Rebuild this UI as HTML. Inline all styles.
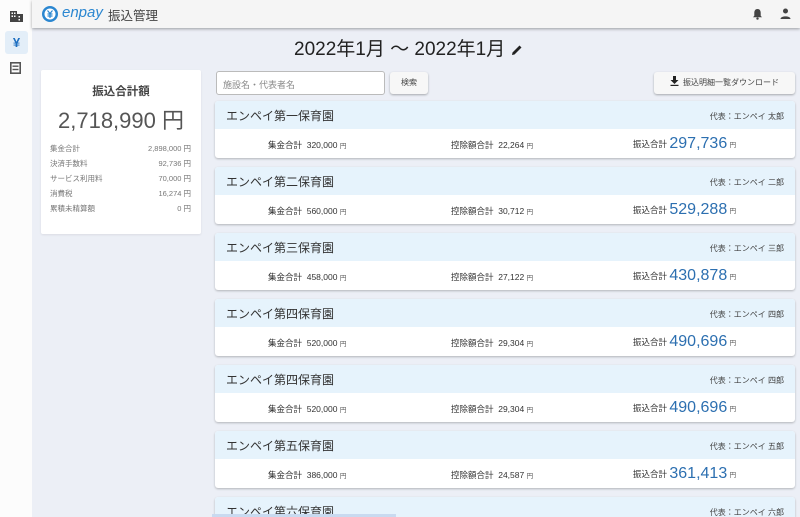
<!DOCTYPE html>
<html style="width:800px;height:517px;overflow:hidden"><head><meta charset="utf-8"><style>
*{box-sizing:border-box;margin:0;padding:0}
html,body{width:800px;height:517px;overflow:hidden}
body{font-family:"Liberation Sans","Noto Sans CJK JP",sans-serif;background:#eceff6;position:relative;color:#333}
b{font-weight:normal}
.side{position:absolute;left:0;top:0;width:32px;height:517px;background:#fcfcfc}
.hdr{position:absolute;left:32px;top:0;width:768px;height:28px;background:#f5f5f5;box-shadow:0 1px 3px rgba(0,0,0,.35)}
.title{position:absolute;left:294px;top:34px;font-size:19px;color:#222;white-space:nowrap}
.lp{position:absolute;left:41px;top:70px;width:160px;height:164px;background:#fff;border-radius:2px;box-shadow:0 1px 2px rgba(0,0,0,.08)}
.lp h3{font-size:11.5px;text-align:center;margin-top:13px;font-weight:bold;color:#444}
.lp .big{font-size:22px;text-align:center;color:#555;margin-top:4px}
.row{display:flex;justify-content:space-between;font-size:7.5px;color:#777;padding:0 10px 0 9px;height:15px;line-height:15px}
.search{position:absolute;left:216px;top:71px;width:169px;height:24px;border:1px solid #bbb;border-radius:3px;background:#fff;font-size:9px;color:#888;padding:6px 6px}
.btn{position:absolute;background:#f7f7f7;border-radius:3px;box-shadow:0 1px 2px rgba(0,0,0,.3);font-size:8px;color:#444;text-align:center}
.card{position:absolute;left:215px;width:580px;height:57px;border-radius:3px;background:#fff;box-shadow:0 1px 2px rgba(0,0,0,.25);overflow:hidden}
.ch{height:28px;background:#e6f3fc;position:relative}
.ch .n{position:absolute;left:11px;top:6px;font-size:12px;color:#333}
.ch .r{position:absolute;right:11px;top:10px;font-size:8px;color:#444}
.cb{position:relative;height:29px;font-size:8.5px;color:#333}
.cb span{position:absolute;top:10px;white-space:nowrap}
.y{font-size:6.5px;color:#555}
.blue{font-size:16px;color:#2c6fb0;position:relative;top:1px}
</style></head><body>
<div class="side">
<svg style="position:absolute;left:10px;top:11px" width="13" height="11" viewBox="0 0 13 11"><rect x="0" y="0" width="7" height="11" fill="#444"/><rect x="7" y="3" width="6" height="8" fill="#444"/><g fill="#fff"><rect x="1.5" y="1.5" width="1.5" height="1.5"/><rect x="4" y="1.5" width="1.5" height="1.5"/><rect x="1.5" y="4.5" width="1.5" height="1.5"/><rect x="4" y="4.5" width="1.5" height="1.5"/><rect x="8.5" y="5" width="1.5" height="1.5"/><rect x="8.5" y="8" width="1.5" height="1.5"/></g></svg>
<div style="position:absolute;left:5px;top:31px;width:23px;height:23px;background:#e3eef8;border-radius:3px;color:#1e6fc0;font-size:13px;font-weight:bold;text-align:center;line-height:23px">¥</div>
<svg style="position:absolute;left:10px;top:62px" width="11" height="12" viewBox="0 0 11 12"><rect x="0.8" y="0.8" width="9.4" height="10.4" fill="none" stroke="#555" stroke-width="1.6"/><rect x="2.5" y="3.5" width="6" height="1.4" fill="#555"/><rect x="2.5" y="6.8" width="6" height="1.4" fill="#555"/></svg>
</div>
<div class="hdr">
<svg style="position:absolute;left:10px;top:6px" width="16" height="16" viewBox="0 0 16 16"><circle cx="8" cy="8" r="8" fill="#2a86d0"/><circle cx="8" cy="8" r="5.5" fill="#fff"/><path d="M5.5 4.5L8 7.5L10.5 4.5M8 7.5V12M5.5 8H10.5M5.5 10H10.5" stroke="#2a86d0" stroke-width="1.2" fill="none"/></svg>
<div style="position:absolute;left:30px;top:4px;font-size:15px;color:#2a86d0;font-style:italic">enpay</div>
<div style="position:absolute;left:76px;top:5px;font-size:12.5px;color:#444">振込管理</div>
<svg style="position:absolute;left:720px;top:8px" width="11" height="12" viewBox="0 0 11 12"><path d="M5.5 1C3.3 1 2.3 2.8 2.3 4.8V7.8L1 9.3H10L8.7 7.8V4.8C8.7 2.8 7.7 1 5.5 1Z" fill="#444"/><circle cx="5.5" cy="10.6" r="1.2" fill="#444"/></svg>
<svg style="position:absolute;left:748px;top:8px" width="11" height="11" viewBox="0 0 11 11"><circle cx="5.5" cy="3" r="2.5" fill="#444"/><path d="M0.5 11C0.5 7.5 10.5 7.5 10.5 11Z" fill="#444"/></svg>
</div>
<div class="title">2022年1月 ～ 2022年1月 <svg width="12" height="12" viewBox="0 0 12 12" style="vertical-align:-1px"><path d="M1 11L1.5 8.5L8.5 1.5L10.5 3.5L3.5 10.5Z" fill="#222"/></svg></div>
<div class="lp">
<h3>振込合計額</h3>
<div class="big">2,718,990 円</div>
<div style="height:6px"></div>
<div class="row"><span>集金合計</span><span>2,898,000 円</span></div>
<div class="row"><span>決済手数料</span><span>92,736 円</span></div>
<div class="row"><span>サービス利用料</span><span>70,000 円</span></div>
<div class="row"><span>消費税</span><span>16,274 円</span></div>
<div class="row"><span>累積未精算額</span><span>0 円</span></div>
</div>
<div class="search">施設名・代表者名</div>
<div class="btn" style="left:390px;top:72px;width:38px;height:22px;line-height:22px">検索</div>
<div class="btn" style="left:654px;top:72px;width:141px;height:22px;line-height:22px"><svg width="9" height="10" viewBox="0 0 9 10" style="vertical-align:-1px;margin-right:4px"><path d="M3 0H6V4H8.5L4.5 8L0.5 4H3Z" fill="#222"/><rect x="0.5" y="8.8" width="8" height="1.2" fill="#222"/></svg>振込明細一覧ダウンロード</div>

<div class="card" style="top:101px"><div class="ch"><span class="n">エンペイ第一保育園</span><span class="r">代表：エンペイ 太郎</span></div><div class="cb"><span style="left:53px">集金合計 &nbsp;320,000 <b class="y">円</b></span><span style="left:236px">控除額合計 &nbsp;22,264 <b class="y">円</b></span><span style="left:418px;top:5px">振込合計 <b class="blue">297,736</b> <b class="y">円</b></span></div></div>
<div class="card" style="top:167px"><div class="ch"><span class="n">エンペイ第二保育園</span><span class="r">代表：エンペイ 二郎</span></div><div class="cb"><span style="left:53px">集金合計 &nbsp;560,000 <b class="y">円</b></span><span style="left:236px">控除額合計 &nbsp;30,712 <b class="y">円</b></span><span style="left:418px;top:5px">振込合計 <b class="blue">529,288</b> <b class="y">円</b></span></div></div>
<div class="card" style="top:233px"><div class="ch"><span class="n">エンペイ第三保育園</span><span class="r">代表：エンペイ 三郎</span></div><div class="cb"><span style="left:53px">集金合計 &nbsp;458,000 <b class="y">円</b></span><span style="left:236px">控除額合計 &nbsp;27,122 <b class="y">円</b></span><span style="left:418px;top:5px">振込合計 <b class="blue">430,878</b> <b class="y">円</b></span></div></div>
<div class="card" style="top:299px"><div class="ch"><span class="n">エンペイ第四保育園</span><span class="r">代表：エンペイ 四郎</span></div><div class="cb"><span style="left:53px">集金合計 &nbsp;520,000 <b class="y">円</b></span><span style="left:236px">控除額合計 &nbsp;29,304 <b class="y">円</b></span><span style="left:418px;top:5px">振込合計 <b class="blue">490,696</b> <b class="y">円</b></span></div></div>
<div class="card" style="top:365px"><div class="ch"><span class="n">エンペイ第四保育園</span><span class="r">代表：エンペイ 四郎</span></div><div class="cb"><span style="left:53px">集金合計 &nbsp;520,000 <b class="y">円</b></span><span style="left:236px">控除額合計 &nbsp;29,304 <b class="y">円</b></span><span style="left:418px;top:5px">振込合計 <b class="blue">490,696</b> <b class="y">円</b></span></div></div>
<div class="card" style="top:431px"><div class="ch"><span class="n">エンペイ第五保育園</span><span class="r">代表：エンペイ 五郎</span></div><div class="cb"><span style="left:53px">集金合計 &nbsp;386,000 <b class="y">円</b></span><span style="left:236px">控除額合計 &nbsp;24,587 <b class="y">円</b></span><span style="left:418px;top:5px">振込合計 <b class="blue">361,413</b> <b class="y">円</b></span></div></div>
<div class="card" style="top:497px;height:20px;border-radius:3px 3px 0 0"><div class="ch"><span class="n">エンペイ第六保育園</span><span class="r">代表：エンペイ 六郎</span></div></div>
<div style="position:absolute;left:212px;top:514px;width:184px;height:3px;background:#c9daf0"></div>
</body></html>
